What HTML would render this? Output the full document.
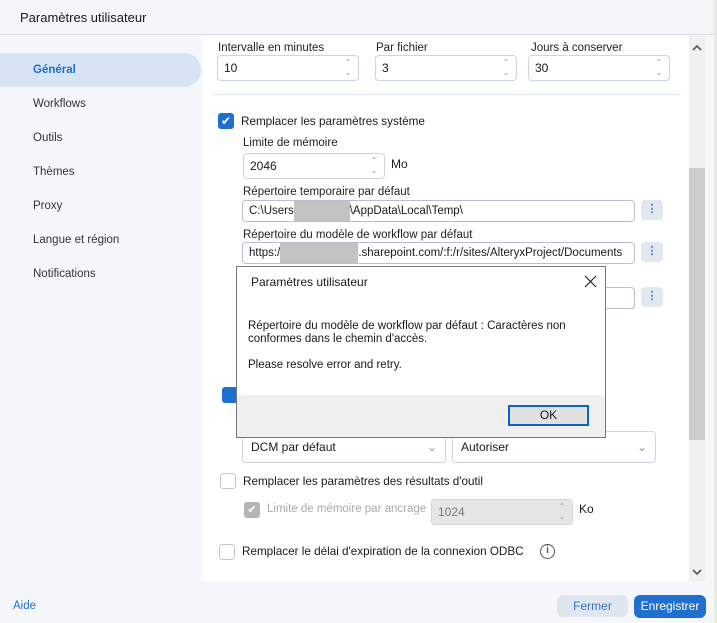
<!DOCTYPE html><html><head><meta charset="utf-8"><style>
*{box-sizing:border-box;margin:0;padding:0}
body{width:717px;height:623px;position:relative;overflow:hidden;background:#f5f7fb;font-family:"Liberation Sans",sans-serif;font-size:12px;color:#1a1a1a}
.a{position:absolute}
.inp{position:absolute;border:1px solid #cfd6e2;border-radius:4px;background:#fff;padding:0 6px;line-height:24px;font-size:12px;white-space:nowrap;overflow:hidden}
.sp{position:absolute;right:3px;width:14px;font-size:8px;color:#999;text-align:center;line-height:10px}
.lab{position:absolute;font-size:11.5px;color:#222}
.cb{position:absolute;width:16px;height:16px;border-radius:3px}
.on{background:#1f6fd1}
.off{border:1px solid #bfc7d4;background:#fff}
.dots{position:absolute;width:22px;height:20px;background:#e3e8f0;border-radius:4px;color:#3a7fd8;text-align:center;font-weight:bold;font-size:11px;line-height:19px}
.nav{position:absolute;left:33px;font-size:11.5px;color:#333}
</style></head><body>
<div class="a" style="left:0;top:0;width:714px;height:35px;background:#f3f5f9;border-bottom:1px solid #d8dde5"></div>
<div class="a" style="left:20px;top:10px;font-size:13px">Paramètres utilisateur</div>
<div class="a" style="left:0;top:53px;width:201px;height:34px;background:#d6e4f4;border-radius:0 17px 17px 0"></div>
<div class="nav" style="top:64px;color:#1f6fd1;font-weight:bold">Général</div>
<div class="nav" style="top:98px">Workflows</div>
<div class="nav" style="top:132px">Outils</div>
<div class="nav" style="top:166px">Thèmes</div>
<div class="nav" style="top:200px">Proxy</div>
<div class="nav" style="top:234px">Langue et région</div>
<div class="nav" style="top:268px">Notifications</div>
<div class="a" style="left:202px;top:36px;width:487px;height:545px;background:#fff"></div>
<div class="a" style="left:689px;top:36px;width:16px;height:545px;background:#f0f0f0"></div>
<div class="a" style="left:689px;top:168px;width:16px;height:272px;background:#cdcdcd"></div>
<svg class="a" style="left:692px;top:44px" width="10" height="8"><path d="M1 6 L5 2 L9 6" stroke="#555" stroke-width="1.6" fill="none"/></svg>
<svg class="a" style="left:692px;top:568px" width="10" height="8"><path d="M1 2 L5 6 L9 2" stroke="#555" stroke-width="1.6" fill="none"/></svg>
<div class="a" style="left:714px;top:0;width:3px;height:623px;background:#e8eae6"></div>
<div class="lab" style="left:218px;top:42px">Intervalle en minutes</div>
<div class="lab" style="left:376px;top:42px">Par fichier</div>
<div class="lab" style="left:531px;top:42px">Jours à conserver</div>
<div class="inp" style="left:217px;top:55px;width:142px;height:26px">10<div class="sp" style="top:2px">⌃<br>⌄</div></div>
<div class="inp" style="left:375px;top:55px;width:142px;height:26px">3<div class="sp" style="top:2px">⌃<br>⌄</div></div>
<div class="inp" style="left:528px;top:55px;width:142px;height:26px">30<div class="sp" style="top:2px">⌃<br>⌄</div></div>
<div class="a" style="left:212px;top:94px;width:469px;height:1px;background:#e3e7ee"></div>
<div class="cb on" style="left:218px;top:113px;color:#fff;font-size:12px;text-align:center;line-height:16px">✔</div>
<div class="a" style="left:241px;top:115px;font-size:11.7px">Remplacer les paramètres système</div>
<div class="lab" style="left:243px;top:137px">Limite de mémoire</div>
<div class="inp" style="left:243px;top:153px;width:142px;height:26px">2046<div class="sp" style="top:2px">⌃<br>⌄</div></div>
<div class="a" style="left:391px;top:157px">Mo</div>
<div class="lab" style="left:243px;top:186px">Répertoire temporaire par défaut</div>
<div class="inp" style="left:242px;top:200px;width:393px;height:22px;line-height:20px;border-color:#b9c0cb;font-size:11.5px">C:\Users<span style="display:inline-block;width:56px;height:20px;background:#c3c3c3;vertical-align:top"></span>\AppData\Local\Temp\</div>
<div class="dots" style="left:641px;top:200px">⋮</div>
<div class="lab" style="left:243px;top:229px">Répertoire du modèle de workflow par défaut</div>
<div class="inp" style="left:242px;top:242px;width:393px;height:22px;line-height:20px;border-color:#b9c0cb;font-size:11.5px">https:/<span style="display:inline-block;width:78px;height:24px;background:#c3c3c3;vertical-align:top"></span>.sharepoint.com/:f:/r/sites/AlteryxProject/Documents</div>
<div class="dots" style="left:641px;top:242px">⋮</div>
<div class="inp" style="left:600px;top:287px;width:35px;height:22px;border-color:#b9c0cb"></div>
<div class="dots" style="left:641px;top:287px">⋮</div>
<div class="cb on" style="left:222px;top:387px"></div>
<div class="inp" style="left:242px;top:431px;width:204px;height:32px;line-height:30px;padding-left:8px">DCM par défaut<span style="position:absolute;right:8px;color:#999">⌄</span></div>
<div class="inp" style="left:452px;top:431px;width:204px;height:32px;line-height:30px;padding-left:8px">Autoriser<span style="position:absolute;right:8px;color:#999">⌄</span></div>
<div class="cb off" style="left:220px;top:473px"></div>
<div class="a" style="left:243px;top:475px;font-size:11.7px">Remplacer les paramètres des résultats d'outil</div>
<div class="cb" style="left:244px;top:502px;background:#b5b5b5;color:#fff;text-align:center;line-height:16px;font-size:11px">✔</div>
<div class="a" style="left:267px;top:503px;color:#aaa;font-size:11.5px">Limite de mémoire par ancrage</div>
<div class="inp" style="left:431px;top:499px;width:142px;height:26px;background:#e6e6e6;border-color:#d5d5d5;color:#777">1024<div class="sp" style="top:2px">⌃<br>⌄</div></div>
<div class="a" style="left:579px;top:502px">Ko</div>
<div class="cb off" style="left:219px;top:544px"></div>
<div class="a" style="left:242px;top:545px;font-size:11.7px">Remplacer le délai d'expiration de la connexion ODBC</div>
<div class="a" style="left:540px;top:544px;width:15px;height:15px;border:1.5px solid #555;border-radius:50%;font-size:10px;text-align:center;line-height:12px;font-weight:bold;color:#555">i</div>
<div class="a" style="left:13px;top:600px;color:#1f6fd1;font-size:11.5px">Aide</div>
<div class="a" style="left:557px;top:595px;width:71px;height:22px;background:#dfe6f0;border-radius:6px;color:#3a70c0;text-align:center;line-height:22px">Fermer</div>
<div class="a" style="left:634px;top:595px;width:72px;height:23px;background:#1f6fd1;border-radius:6px;color:#fff;text-align:center;line-height:23px">Enregistrer</div>
<div class="a" style="left:236px;top:266px;width:370px;height:172px;background:#fff;border:1px solid #777"></div>
<div class="a" style="left:237px;top:395px;width:368px;height:42px;background:#f0f0f0"></div>
<div class="a" style="left:251px;top:275px;font-size:12px">Paramètres utilisateur</div>
<svg class="a" style="left:584px;top:275px" width="13" height="13"><path d="M1 1 L12 12 M12 1 L1 12" stroke="#222" stroke-width="1.2"/></svg>
<div class="a" style="left:248px;top:320px;font-size:11.5px;line-height:13px">Répertoire du modèle de workflow par défaut : Caractères non<br>conformes dans le chemin d'accès.</div>
<div class="a" style="left:248px;top:359px;font-size:11.5px">Please resolve error and retry.</div>
<div class="a" style="left:508px;top:405px;width:81px;height:21px;background:#e1e1e1;border:2px solid #0a64c8;text-align:center;line-height:17px">OK</div>
</body></html>
